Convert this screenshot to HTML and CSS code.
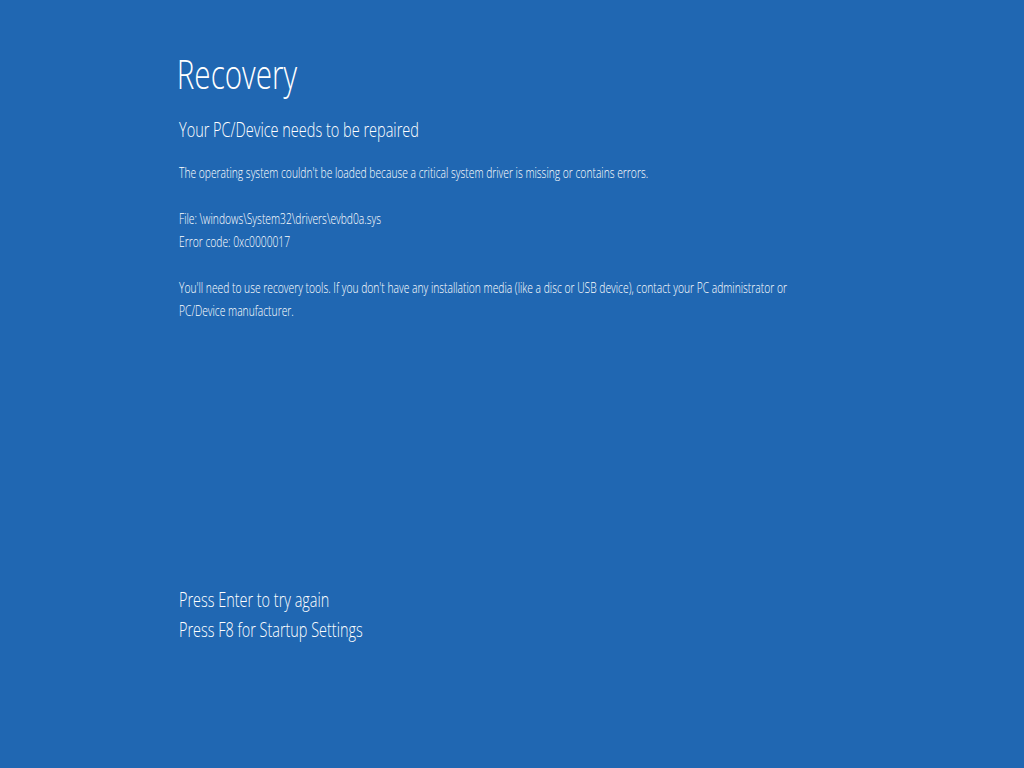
FILE: index.html
```html
<!DOCTYPE html>
<html>
<head>
<meta charset="utf-8">
<link rel="stylesheet" href="styles.css">
<title>Recovery</title>
</head>
<body>
<main class="screen">
  <div class="content">
    <h1 class="title">Recovery</h1>
    <h2 class="subtitle">Your PC/Device needs to be repaired</h2>
    <p class="text">The operating system couldn't be loaded because a critical system driver is missing or contains errors.</p>
    <p class="text">File: \windows\System32\drivers\evbd0a.sys<br>Error code: 0xc0000017</p>
    <p class="text">You'll need to use recovery tools. If you don't have any installation media (like a disc or USB device), contact your PC administrator or<br>PC/Device manufacturer.</p>
    <div class="actions">
      <div class="action">Press Enter to try again</div>
      <div class="action">Press F8 for Startup Settings</div>
    </div>
  </div>
</main>
</body>
</html>
```
FILE: styles.css
```css
html, body {
  margin: 0;
  padding: 0;
  background: #2067b2;
  width: 1024px;
  height: 768px;
  overflow: hidden;
}
.screen {
  padding: 45px 0 0 179px;
  color: #ffffff;
  font-family: "Open Sans", "Noto Sans", sans-serif;
}
.content {
  width: 1000px;
  transform: scaleX(0.74);
  transform-origin: left top;
}
.title {
  margin: 0 0 0 -3px;
  font-size: 40px;
  font-weight: 300;
  line-height: 58px;
}
.subtitle {
  margin: 13px 0 17px 0;
  font-size: 19.6px;
  font-weight: 300;
  line-height: 28px;
}
.text {
  margin: 0 0 23px 0;
  font-size: 13.9px;
  font-weight: 300;
  line-height: 23px;
}
.actions {
  margin-top: 263px;
}
.action {
  font-size: 19.5px;
  font-weight: 300;
  line-height: 30px;
}
```
